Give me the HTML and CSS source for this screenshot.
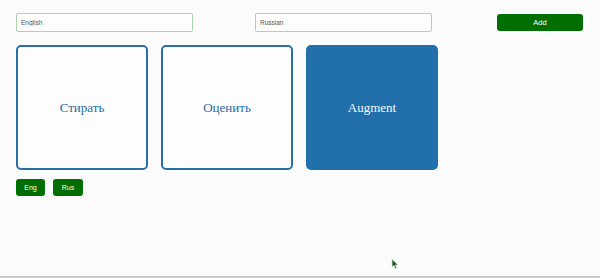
FILE: index.html
```html
<!DOCTYPE html>
<html>
<head>
<meta charset="utf-8">
<link rel="stylesheet" href="styles.css">
</head>
<body>
<div class="page">
  <div class="top-row">
    <input class="field" type="text" placeholder="English">
    <input class="field field-second" type="text" placeholder="Russian">
    <button class="add-btn">Add</button>
  </div>
  <div class="cards">
    <div class="card">Стирать</div>
    <div class="card">Оценить</div>
    <div class="card card-filled">Augment</div>
  </div>
  <div class="lang-row">
    <button class="lang-btn">Eng</button>
    <button class="lang-btn lang-rus">Rus</button>
  </div>
  <div class="spacer"></div>
  <div class="shelf"></div>
</div>
<svg class="cursor" width="8" height="12" viewBox="0 0 8 12"><path d="M1 1 L1 9 L3 7.5 L4.5 11 L5.8 10.4 L4.4 7 L7 7 Z" fill="#1f5a2a" stroke="#d8d8d8" stroke-width="0.8"/></svg>
</body>
</html>
```
FILE: styles.css
```css
html, body {
  margin: 0;
  padding: 0;
  background: #fbfbfb;
}
body {
  width: 600px;
  height: 278px;
  overflow: hidden;
  position: relative;
  font-family: "Liberation Sans", Arial, sans-serif;
}
.page {
  height: 278px;
  display: flex;
  flex-direction: column;
  padding: 13px 0 0 16px;
  box-sizing: border-box;
}
.top-row {
  display: flex;
  align-items: center;
  height: 19px;
}
.field {
  width: 177px;
  height: 19px;
  box-sizing: border-box;
  border: 1px solid #acd4ac;
  border-radius: 2px;
  background: #fdfdfd;
  padding: 0 0 0 4px;
  font-family: "Liberation Sans", Arial, sans-serif;
  font-size: 6.5px;
  outline: none;
}
.field::placeholder {
  color: #555;
}
.field-second {
  margin-left: 62px;
}
.add-btn {
  margin-left: 65px;
  width: 86px;
  height: 17px;
  border: none;
  border-radius: 3px;
  background: #006e00;
  color: #fff;
  font-family: "Liberation Sans", Arial, sans-serif;
  font-size: 7.5px;
  padding: 0;
}
.cards {
  display: flex;
  gap: 13px;
  margin-top: 13px;
}
.card {
  width: 132px;
  height: 125px;
  box-sizing: border-box;
  border: 2px solid #2c6ea9;
  border-radius: 5px;
  background: #fdfdfd;
  display: flex;
  align-items: center;
  justify-content: center;
  font-family: "Liberation Serif", "Times New Roman", serif;
  font-size: 13px;
  color: #2a68a3;
}
.card-filled {
  background: #2270ab;
  border-color: #2270ab;
  color: #f4f8fc;
}
.lang-row {
  display: flex;
  gap: 8px;
  margin-top: 9px;
}
.lang-btn {
  width: 29px;
  height: 17px;
  border: none;
  border-radius: 3px;
  background: #006e00;
  color: #fff;
  font-family: "Liberation Sans", Arial, sans-serif;
  font-size: 7px;
  padding: 0;
}
.lang-rus {
  width: 30px;
}
.spacer {
  flex: 1;
}
.shelf {
  margin-left: -16px;
  width: 600px;
  height: 2px;
  background: #c9c9c9;
  box-shadow: 0 -6px 10px -2px rgba(0,0,0,0.06);
}
.cursor {
  position: absolute;
  left: 391px;
  top: 258px;
}
```
